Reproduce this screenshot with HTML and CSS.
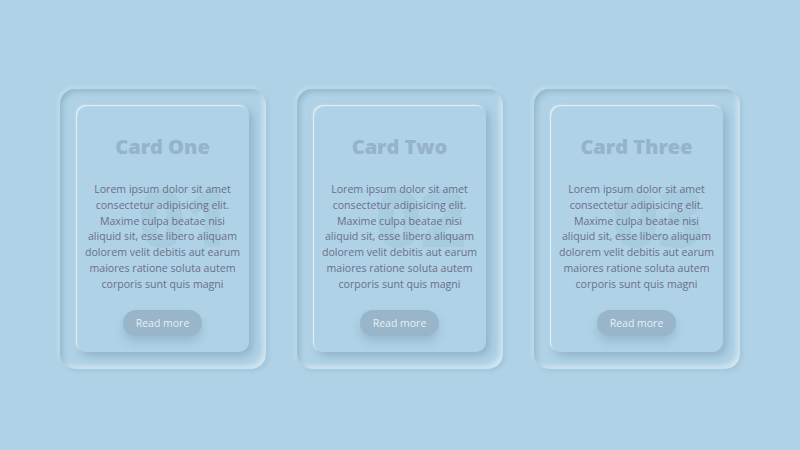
FILE: index.html
```html
<!DOCTYPE html>
<html>
<head>
<meta charset="utf-8">
<link rel="stylesheet" href="styles.css">
</head>
<body>
<main class="container">
  <div class="card">
    <div class="box">
      <span class="num">01</span>
      <h2 class="title">Card One</h2>
      <p class="text">Lorem ipsum dolor sit amet<br>consectetur adipisicing elit.<br>Maxime culpa beatae nisi<br>aliquid sit, esse libero aliquam<br>dolorem velit debitis aut earum<br>maiores ratione soluta autem<br>corporis sunt quis magni</p>
      <a class="btn">Read more</a>
    </div>
  </div>
  <div class="card">
    <div class="box">
      <span class="num">02</span>
      <h2 class="title">Card Two</h2>
      <p class="text">Lorem ipsum dolor sit amet<br>consectetur adipisicing elit.<br>Maxime culpa beatae nisi<br>aliquid sit, esse libero aliquam<br>dolorem velit debitis aut earum<br>maiores ratione soluta autem<br>corporis sunt quis magni</p>
      <a class="btn">Read more</a>
    </div>
  </div>
  <div class="card">
    <div class="box">
      <span class="num">03</span>
      <h2 class="title">Card Three</h2>
      <p class="text">Lorem ipsum dolor sit amet<br>consectetur adipisicing elit.<br>Maxime culpa beatae nisi<br>aliquid sit, esse libero aliquam<br>dolorem velit debitis aut earum<br>maiores ratione soluta autem<br>corporis sunt quis magni</p>
      <a class="btn">Read more</a>
    </div>
  </div>
</main>
</body>
</html>
```

FILE: styles.css
```css
* { box-sizing: border-box; }
html, body {
  margin: 0;
  padding: 0;
  background: #afd2e6;
  font-family: "Open Sans", "Liberation Sans", sans-serif;
}
.container {
  width: 800px;
  height: 450px;
  display: flex;
  justify-content: center;
  align-items: flex-start;
  gap: 31px;
  padding-top: 89px;
}
.card {
  width: 206px;
  height: 280px;
  border-radius: 15px;
  padding: 16px 17px 17px 16px;
  box-shadow:
    inset 3px 3px 5px rgba(60, 100, 130, 0.22),
    inset -3px -3px 5px rgba(255, 255, 255, 0.45),
    2px 2px 4px rgba(60, 100, 130, 0.12),
    -2px -2px 4px rgba(255, 255, 255, 0.25);
}
.box {
  position: relative;
  height: 100%;
  border-radius: 10px;
  background: #afd2e6;
  display: flex;
  flex-direction: column;
  align-items: center;
  padding-top: 30px;
  overflow: hidden;
  box-shadow:
    inset 1px 1px 1px rgba(255, 255, 255, 0.7),
    4px 4px 8px rgba(60, 100, 130, 0.28),
    -1px -1px 3px rgba(255, 255, 255, 0.3);
}
.num {
  position: absolute;
  top: 71px;
  right: 21px;
  font-size: 80px;
  font-weight: 800;
  line-height: 1;
  color: rgba(90, 130, 160, 0.09);
  letter-spacing: -2px;
}
.title {
  position: relative;
  margin: 0;
  font-size: 20px;
  font-weight: 800;
  line-height: 24px;
  color: #95b3ca;
}
.text {
  position: relative;
  margin: 23px 0 0;
  font-size: 10.6px;
  line-height: 15.8px;
  text-align: center;
  color: #6b6f88;
  white-space: nowrap;
}
.btn {
  position: relative;
  margin-top: 17px;
  width: 79px;
  height: 26px;
  border-radius: 13px;
  background: #98b5ca;
  color: #e6f0f6;
  font-size: 10.5px;
  display: flex;
  align-items: center;
  justify-content: center;
  box-shadow: 0 6px 10px rgba(60, 100, 130, 0.2);
}
```
